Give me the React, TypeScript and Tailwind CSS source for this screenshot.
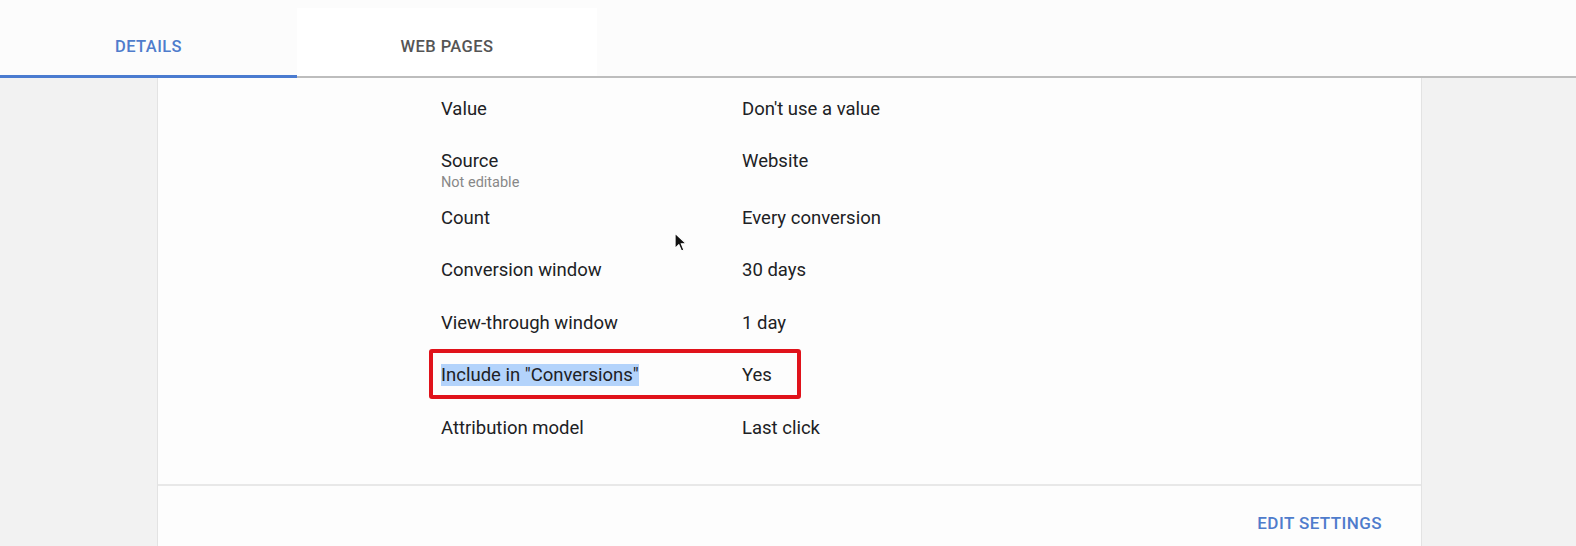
const rows = [
    { label: "Value", value: "Don't use a value", h: "h-[52px]" },
    { label: "Source", value: "Website", note: "Not editable", h: "h-[57px]" },
    { label: "Count", value: "Every conversion", h: "h-[52px]" },
    { label: "Conversion window", value: "30 days", h: "h-[53px]" },
    { label: "View-through window", value: "1 day", h: "h-[52px]" },
    { label: 'Include in "Conversions"', value: "Yes", h: "h-[53px]", marked: true },
    { label: "Attribution model", value: "Last click", h: "h-[52px]" },
];

function Cursor() {
    return (
        <svg width="15" height="22" viewBox="0 0 14 20" className="absolute left-[674px] top-[232px]">
            <path d="M1 1 L1 15 L4.5 11.5 L7 17.5 L9.2 16.6 L6.8 10.8 L11.5 10.8 Z" fill="#111" stroke="#fff" strokeWidth="1" />
        </svg>
    );
}

export default function App() {
    return (
        <div className="relative h-[546px] w-full overflow-hidden bg-[#f2f2f2] font-['Roboto',sans-serif]">
            <header className="flex h-[78px] bg-[#fcfcfc] border-b-2 border-[#bdbdbd]">
                <div className="-mb-[2px] w-[297px] border-b-[3px] border-[#4a7bd0] pt-[37px] text-center text-[16.5px] leading-[20px] font-medium tracking-wide text-[#4f7ccc]">
                    DETAILS
                </div>
                <div className="mt-[8px] w-[300px] bg-white pt-[29px] text-center text-[16.5px] leading-[20px] font-medium tracking-wide text-[#555]">
                    WEB PAGES
                </div>
            </header>

            <div className="ml-[157px] h-[500px] w-[1265px] border-l border-r border-[#e3e3e3] bg-[#fdfdfd]">
                <div className="pt-[5px] pl-[283px]">
                    {rows.map((r) => (
                        <div key={r.label} className={`relative flex pt-[14px] ${r.h}`}>
                            {r.marked && (
                                <div className="absolute left-[-12px] top-0 h-[50px] w-[372px] rounded-[3px] border-4 border-[#e0121b]" />
                            )}
                            <div className="w-[301px]">
                                <div className="text-[18.5px] leading-[24px] text-[#202124]">
                                    {r.marked ? <span className="bg-[#b3d3fb]">{r.label}</span> : r.label}
                                </div>
                                {r.note && (
                                    <div className="mt-[1px] text-[14.5px] leading-[18px] text-[#888]">{r.note}</div>
                                )}
                            </div>
                            <div className="text-[18.5px] leading-[24px] text-[#202124]">{r.value}</div>
                        </div>
                    ))}
                </div>
                <div className="mt-[30px] border-t-2 border-[#e8e8e8]" />
                <div className="flex justify-end pr-[39px] pt-[25px]">
                    <button className="text-[17px] font-medium tracking-wide text-[#4f7ccc]">EDIT SETTINGS</button>
                </div>
            </div>

            <Cursor />
        </div>
    );
}
